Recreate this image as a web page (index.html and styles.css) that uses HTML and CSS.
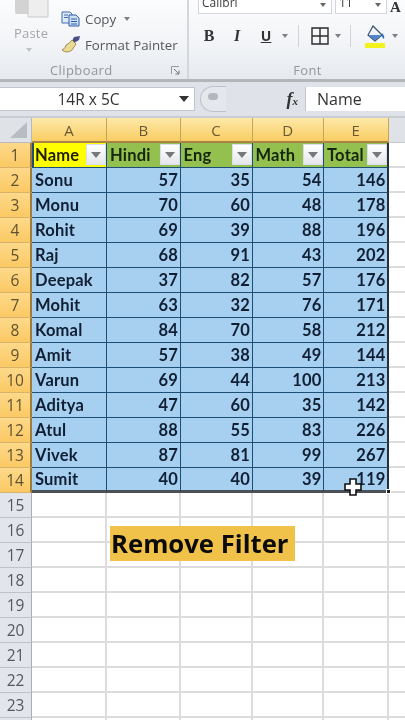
FILE: index.html
```html
<!DOCTYPE html>
<html lang="en">
<head>
<meta charset="utf-8">
<title>Remove Filter</title>
<link rel="stylesheet" href="styles.css">
</head>
<body>
<div class="app">
  <section class="ribbon">
    <div class="group clipboard">
      <div class="group-body">
        <div class="paste">
          <svg class="paste-icon" width="36" height="18" viewBox="0 0 36 18"><rect x="0" y="-6" width="24" height="20" rx="2" fill="#d3d3d3"/><path d="M13 -2H33V17H13Z" fill="#eeeeee" stroke="#c9c9c9"/></svg>
          <span class="paste-label">Paste</span>
          <span class="tiny-arrow pale"></span>
        </div>
        <div class="clip-actions">
          <div class="clip-row copy-row">
            <svg width="20" height="16" viewBox="0 0 20 16"><path d="M1 1H9L11 3V12H1Z" fill="#dfe8f5" stroke="#3f6cb0"/><path d="M8 4H15L18 7V15H8Z" fill="#cfe0f6" stroke="#2f5da6"/><path d="M10 8H16M10 10.500H16M10 13H16" stroke="#2f5da6"/><path d="M3 4H7M3 6.500H7" stroke="#3f6cb0"/></svg>
            <span>Copy</span>
            <span class="tiny-arrow"></span>
          </div>
          <div class="clip-row painter-row">
            <svg width="20" height="18" viewBox="0 0 20 18"><path d="M13 1L19 0L18 4L13 7L11 5Z" fill="#4b4f86"/><path d="M11 4L15 8L11 14Q6 18 1 14Q5 12 5 9Q8 8 11 4Z" fill="#eadb93" stroke="#8b7a3e" stroke-width=".8"/></svg>
            <span>Format Painter</span>
          </div>
        </div>
      </div>
      <div class="group-foot">
        <span class="group-label clip-label">Clipboard</span>
        <svg class="launcher" width="9" height="9" viewBox="0 0 9 9"><path d="M.5 8V.5H8" fill="none" stroke="#9a9a9a"/><path d="M3 3L8 8M8 4.500V8H4.500" fill="none" stroke="#777"/></svg>
      </div>
    </div>
    <div class="group font-group">
      <div class="font-combos">
        <div class="combo font-name"><span>Calibri</span><span class="tiny-arrow dark"></span></div>
        <div class="combo font-size"><span>11</span><span class="tiny-arrow dark"></span></div>
        <span class="grow-a">A</span>
      </div>
      <div class="font-tools">
        <b class="tool tool-b">B</b>
        <i class="tool tool-i">I</i>
        <u class="tool tool-u">U</u>
        <span class="tiny-arrow"></span>
        <span class="tool-sep sep-one"></span>
        <svg class="borders" width="18" height="18" viewBox="0 0 18 18"><path d="M1 1H17V17H1ZM9 1V17M1 9H17" fill="none" stroke="#2b2b2b" stroke-width="1.400"/></svg>
        <span class="tiny-arrow"></span>
        <span class="tool-sep sep-two"></span>
        <svg class="fill-icon" width="21" height="24" viewBox="0 0 21 24"><path d="M8 2L17 11L10 17L3 11Z" fill="#eef3fa" stroke="#39506e" stroke-width="1.200"/><path d="M4 11H16L10 16.500Z" fill="#4d86d0"/><path d="M17 9Q20 12 19 15Q16 13 17 9Z" fill="#2e6fc7"/><rect x="0" y="19" width="20" height="5" fill="#f2f21c"/></svg>
        <span class="tiny-arrow"></span>
      </div>
      <div class="font-foot"><span class="group-label">Font</span></div>
    </div>
  </section>

  <section class="formula-bar">
    <div class="name-box"><span class="name-value">14R x 5C</span><span class="name-arrow"></span></div>
    <div class="fx-zone">
      <span class="fx-pill"><span class="fx-knob"></span></span>
      <span class="fx">f<small>x</small></span>
    </div>
    <div class="formula-input">Name</div>
  </section>

  <section class="sheet">
    <div class="corner"><svg width="26" height="20" viewBox="0 0 26 20"><path d="M24 2V18H7Z" fill="#b9bdc3"/></svg></div>
    <div class="col-head">A</div><div class="col-head">B</div><div class="col-head">C</div><div class="col-head">D</div><div class="col-head">E</div><div class="col-rest"></div>

    <div class="row-head on">1</div>
    <div class="cell hd yellow">Name<span class="filter"></span></div>
    <div class="cell hd green">Hindi<span class="filter"></span></div>
    <div class="cell hd green">Eng<span class="filter"></span></div>
    <div class="cell hd green">Math<span class="filter"></span></div>
    <div class="cell hd green last">Total<span class="filter"></span></div>
    <div class="blank rest"></div>

    <div class="row-head on">2</div><div class="cell">Sonu</div><div class="cell n">57</div><div class="cell n">35</div><div class="cell n">54</div><div class="cell n last">146</div><div class="blank rest"></div>
    <div class="row-head on">3</div><div class="cell">Monu</div><div class="cell n">70</div><div class="cell n">60</div><div class="cell n">48</div><div class="cell n last">178</div><div class="blank rest"></div>
    <div class="row-head on">4</div><div class="cell">Rohit</div><div class="cell n">69</div><div class="cell n">39</div><div class="cell n">88</div><div class="cell n last">196</div><div class="blank rest"></div>
    <div class="row-head on">5</div><div class="cell">Raj</div><div class="cell n">68</div><div class="cell n">91</div><div class="cell n">43</div><div class="cell n last">202</div><div class="blank rest"></div>
    <div class="row-head on">6</div><div class="cell">Deepak</div><div class="cell n">37</div><div class="cell n">82</div><div class="cell n">57</div><div class="cell n last">176</div><div class="blank rest"></div>
    <div class="row-head on">7</div><div class="cell">Mohit</div><div class="cell n">63</div><div class="cell n">32</div><div class="cell n">76</div><div class="cell n last">171</div><div class="blank rest"></div>
    <div class="row-head on">8</div><div class="cell">Komal</div><div class="cell n">84</div><div class="cell n">70</div><div class="cell n">58</div><div class="cell n last">212</div><div class="blank rest"></div>
    <div class="row-head on">9</div><div class="cell">Amit</div><div class="cell n">57</div><div class="cell n">38</div><div class="cell n">49</div><div class="cell n last">144</div><div class="blank rest"></div>
    <div class="row-head on">10</div><div class="cell">Varun</div><div class="cell n">69</div><div class="cell n">44</div><div class="cell n">100</div><div class="cell n last">213</div><div class="blank rest"></div>
    <div class="row-head on">11</div><div class="cell">Aditya</div><div class="cell n">47</div><div class="cell n">60</div><div class="cell n">35</div><div class="cell n last">142</div><div class="blank rest"></div>
    <div class="row-head on">12</div><div class="cell">Atul</div><div class="cell n">88</div><div class="cell n">55</div><div class="cell n">83</div><div class="cell n last">226</div><div class="blank rest"></div>
    <div class="row-head on">13</div><div class="cell">Vivek</div><div class="cell n">87</div><div class="cell n">81</div><div class="cell n">99</div><div class="cell n last">267</div><div class="blank rest"></div>
    <div class="row-head on">14</div><div class="cell bottom">Sumit</div><div class="cell n bottom">40</div><div class="cell n bottom">40</div><div class="cell n bottom">39</div><div class="cell n last bottom">119</div><div class="blank rest"></div>

    <div class="row-head">15</div><div class="blank"></div><div class="blank"></div><div class="blank"></div><div class="blank"></div><div class="blank"></div><div class="blank rest"></div>
    <div class="row-head">16</div><div class="blank"></div><div class="blank"></div><div class="blank"></div><div class="blank"></div><div class="blank"></div><div class="blank rest"></div>
    <div class="row-head">17</div><div class="blank"></div><div class="blank"></div><div class="blank"></div><div class="blank"></div><div class="blank"></div><div class="blank rest"></div>
    <div class="row-head">18</div><div class="blank"></div><div class="blank"></div><div class="blank"></div><div class="blank"></div><div class="blank"></div><div class="blank rest"></div>
    <div class="row-head">19</div><div class="blank"></div><div class="blank"></div><div class="blank"></div><div class="blank"></div><div class="blank"></div><div class="blank rest"></div>
    <div class="row-head">20</div><div class="blank"></div><div class="blank"></div><div class="blank"></div><div class="blank"></div><div class="blank"></div><div class="blank rest"></div>
    <div class="row-head">21</div><div class="blank"></div><div class="blank"></div><div class="blank"></div><div class="blank"></div><div class="blank"></div><div class="blank rest"></div>
    <div class="row-head">22</div><div class="blank"></div><div class="blank"></div><div class="blank"></div><div class="blank"></div><div class="blank"></div><div class="blank rest"></div>
    <div class="row-head">23</div><div class="blank"></div><div class="blank"></div><div class="blank"></div><div class="blank"></div><div class="blank"></div><div class="blank rest"></div>
    <div class="row-head"></div><div class="blank"></div><div class="blank"></div><div class="blank"></div><div class="blank"></div><div class="blank"></div><div class="blank rest"></div>

    <span class="handle"></span>
    <svg class="cursor" width="18" height="18" viewBox="0 0 18 18"><path d="M6 1H12V6H17V12H12V17H6V12H1V6H6Z" fill="#fff" stroke="#111" stroke-width="1.600"/></svg>
    <div class="caption">Remove Filter</div>
  </section>
</div>
</body>
</html>
```
FILE: styles.css
```css
* { box-sizing: border-box; }
html, body { margin: 0; padding: 0; background: #fff; }
body { width: 405px; height: 720px; overflow: hidden; font-family: "Open Sans", "Noto Sans", sans-serif; }
.app { width: 405px; height: 720px; overflow: hidden; display: flex; flex-direction: column; filter: blur(.35px); }

/* ribbon */
.ribbon { height: 82px; flex: none; display: flex; background: linear-gradient(#fbfcfd, #f2f4f7 55%, #e6e9ee); border-bottom: 3px solid #b3b5b9; color: #5f6165; }
.group { display: flex; flex-direction: column; }
.clipboard { width: 189px; border-right: 2px solid #d3d6da; }
.group-body { flex: 1; display: flex; }
.paste { width: 61px; display: flex; flex-direction: column; align-items: flex-start; padding-left: 14px; }
.paste-icon { margin-left: 1px; }
.paste-label { font-size: 13px; line-height: 18px; margin-top: 6px; color: #a4a6a9; letter-spacing: .2px; }
.paste .tiny-arrow { margin: 6px 0 0 12px; }
.clip-actions { display: flex; flex-direction: column; padding-top: 10px; }
.clip-row { display: flex; align-items: center; font-size: 13.300px; line-height: 18px; color: #55575b; white-space: nowrap; }
.clip-row svg { margin-right: 4px; flex: none; }
.copy-row .tiny-arrow { margin-left: 8px; }
.painter-row { margin-top: 8px; }
.group-foot { height: 22px; display: flex; align-items: center; padding: 4px 7px 0 50px; justify-content: space-between; }
.group-label { font-size: 13px; color: #93969a; letter-spacing: .4px; }
.font-group { flex: 1; min-width: 0; padding-left: 9px; }
.font-combos { height: 14px; flex: none; display: flex; gap: 3px; align-items: flex-end; overflow: hidden; }
.combo { height: 14px; background: #fff; border: 1px solid #d4d6d9; border-top: 0; display: flex; justify-content: space-between; align-items: flex-end; padding: 0 5px 0 3px; font-size: 12px; line-height: 20px; color: #3b3b3b; overflow: hidden; }
.combo .tiny-arrow { margin-bottom: 6px; }
.font-name { width: 134px; }
.font-size { width: 52px; }
.grow-a { font-size: 15px; line-height: 14px; font-weight: 700; color: #333; font-family: "Liberation Serif", serif; }
.font-tools { height: 33px; margin-top: 5px; flex: none; display: flex; align-items: center; color: #333; }
.tool { width: 20px; font-family: "Liberation Serif", serif; font-size: 16px; font-weight: 700; text-align: center; color: #333; }
.tool-b { margin-left: 1px; }
.tool-i { margin-left: 8px; font-family: "Liberation Serif", serif; }
.tool-u { margin-left: 9px; font-family: "Open Sans", sans-serif; font-size: 14px; }
.font-tools > .tiny-arrow { margin-left: 6px; }
.tool-sep { width: 1px; height: 22px; background: #d1d4d8; }
.sep-one { margin-left: 10px; }
.borders { margin-left: 12px; }
.sep-two { margin-left: 9px; }
.fill-icon { margin-left: 14px; }
.font-foot { flex: 1; display: flex; justify-content: center; padding-left: 12px; padding-top: 9px; }
.tiny-arrow { display: inline-block; width: 0; height: 0; border: 3.500px solid transparent; border-top: 4px solid #7d7f83; border-bottom: 0; flex: none; }
.tiny-arrow.pale { border-top-color: #c0c2c5; }
.tiny-arrow.dark { border-top-color: #666; }

/* formula bar */
.formula-bar { height: 36px; flex: none; display: flex; background: #dfe3e9; padding: 5px 0; border-bottom: 2px solid #c9ccd1; }
.name-box { width: 195px; background: #fff; border: 1px solid #c2c6cc; border-left: 0; display: flex; align-items: center; padding-right: 3px; }
.name-value { flex: 1; text-align: center; font-size: 15.500px; color: #333; padding-right: 2px; }
.name-arrow { width: 0; height: 0; border: 5px solid transparent; border-top: 6px solid #333; border-bottom: 0; margin-right: 2px; }
.fx-zone { width: 110px; display: flex; align-items: center; justify-content: space-between; padding: 0 7px 0 5px; }
.fx-pill { width: 26px; height: 26px; border-radius: 13px 0 0 13px; background: #e4e7ec; border: 1px solid #bfc3c9; border-right: 0; display: flex; padding: 6px 0 0 7px; }
.fx-knob { width: 10px; height: 7px; border-radius: 5px; background: #b4b8be; }
.fx { font-family: "Liberation Serif", serif; font-style: italic; font-weight: 700; font-size: 18px; color: #333; }
.fx small { font-size: 11px; }
.formula-input { flex: 1; background: #fff; border-left: 1px solid #c2c6cc; font-size: 16px; line-height: 24px; padding-left: 11px; color: #333; }

/* sheet */
.sheet { position: relative; flex: 1; display: grid; grid-template-columns: 32px 75px 73.500px 72px 71.500px 64.500px 16.500px; grid-auto-rows: 25px; background: #fff; }
.corner { background: #dfe3e8; border-right: 1px solid #b5b9bf; border-bottom: 1px solid #b5b9bf; display: flex; align-items: center; justify-content: center; }
.col-head { background: linear-gradient(#fde9a9, #f9cd62); border-right: 1.500px solid #c9a35a; border-bottom: 2px solid #a98345; display: flex; align-items: center; justify-content: center; font-size: 15px; color: #6a5a34; }
.col-rest { background: #dfe3e8; border-bottom: 1px solid #c5c8cd; }
.row-head { background: #e2e6ec; border-right: 1px solid #a9adb4; border-bottom: 1.500px solid #bfc3c9; display: flex; align-items: center; justify-content: center; font-size: 15.500px; color: #55585c; }
.row-head.on { background: linear-gradient(#fdd98a, #fbc964); border-right: 2px solid #a07c3b; border-bottom-color: #d8b36b; color: #5f5230; }
.cell { position: relative; background: #a7cff0; border-right: 1.500px solid #1d4f76; border-bottom: 1.500px solid #1d4f76; display: flex; align-items: center; padding: 0 1.500px 0 3px; font-family: Lato, "Open Sans", sans-serif; font-weight: 700; font-size: 16.500px; color: #101f33; white-space: nowrap; overflow: hidden; letter-spacing: .2px; }
.cell.n { justify-content: flex-end; }
.cell.last { border-right: 2px solid #24303c; padding-right: 1px; }
.cell.bottom { border-bottom: 3px solid #4c5157; }
.cell.hd { background: #93c04f; color: #16250c; border-bottom-color: #1d4f76; }
.cell.yellow { background: #ffff00; color: #1f1f00; box-shadow: inset 2px 0 #1d4f76; padding-left: 3px; }
.filter { position: absolute; right: 0; top: 1px; width: 20px; height: 21px; background: linear-gradient(#ffffff, #e4e6ea); border: 1px solid #dcdcf0; }
.filter::after { content: ""; position: absolute; left: 4px; top: 7px; border: 5px solid transparent; border-top: 6px solid #76787c; border-bottom: 0; }
.blank { border-right: 2px solid #dcdcdc; border-bottom: 2px solid #dcdcdc; }
.blank.rest { border-right: 0; }

.handle { position: absolute; left: 386px; top: 371px; width: 5px; height: 5px; background: #222; border: 1px solid #fff; }
.cursor { position: absolute; left: 344px; top: 360px; }
.caption { position: absolute; left: 110px; top: 408px; width: 185px; height: 35px; background: #f1c24a; color: #0b0b0b; font-weight: 700; font-size: 25.700px; line-height: 35px; padding-left: 1px; white-space: nowrap; }
```
